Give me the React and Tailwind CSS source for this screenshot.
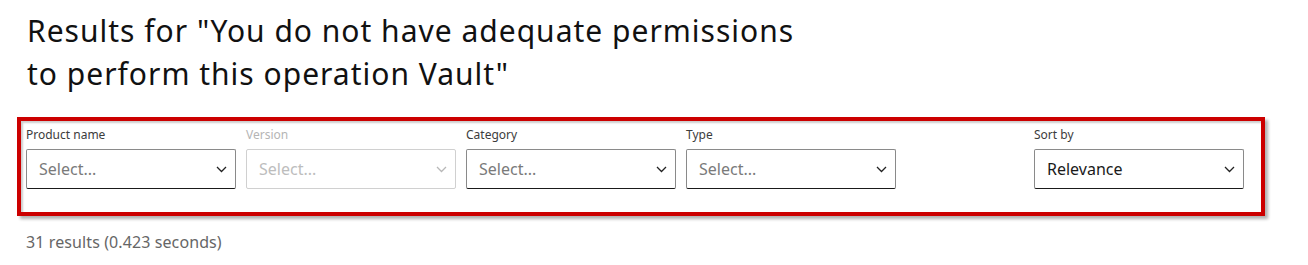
import React from "react";

function Chevron({ disabled }) {
  return (
    <svg width="11" height="7" viewBox="0 0 11 7" className="shrink-0">
      <path
        d="M1 1l4.5 4.5L10 1"
        fill="none"
        stroke={disabled ? "#b8b8b8" : "#222"}
        strokeWidth="1.3"
      />
    </svg>
  );
}

function Field({ label, value, placeholder = true, disabled = false }) {
  return (
    <div className="flex w-[210px] flex-col">
      <div
        className={`h-[16px] text-[12px] leading-[16px] ${
          disabled ? "text-[#b5b5b5]" : "text-[#3c3c3c]"
        }`}
      >
        {label}
      </div>
      <div
        className={`mt-[6px] flex h-[40px] items-center justify-between rounded-[2px] border pl-[12px] pr-[8px] ${
          disabled
            ? "border-[#d0d0d0]"
            : "border-[#8a8a8a] border-b-[#1a1a1a]"
        }`}
      >
        <span
          className={`text-[16px] ${
            disabled
              ? "text-[#bdbdbd]"
              : placeholder
              ? "text-[#7a7a7a]"
              : "text-[#1a1a1a]"
          }`}
        >
          {value}
        </span>
        <Chevron disabled={disabled} />
      </div>
    </div>
  );
}

export default function App() {
  return (
    <div
      className="h-[265px] w-[1308px] bg-white"
      style={{ fontFamily: '"Noto Sans", "Open Sans", sans-serif' }}
    >
      <h1 className="pl-[27px] pt-[9px] text-[30px] font-normal leading-[43px] tracking-[1px] text-[#111]">
        Results for "You do not have adequate permissions
        <br />
        to perform this operation Vault"
      </h1>
      <div className="ml-[17px] mt-[22px] w-[1248px] border-[4px] border-[#cc0000] pb-[23px] pl-[5px] pr-[17px] pt-[6px] shadow-[3px_3px_3px_rgba(0,0,0,0.3),inset_2px_2px_2px_rgba(0,0,0,0.2)]">
        <div className="flex">
          <div className="flex gap-[10px]">
            <Field label="Product name" value="Select..." />
            <Field label="Version" value="Select..." disabled />
            <Field label="Category" value="Select..." />
            <Field label="Type" value="Select..." />
          </div>
          <div className="ml-auto">
            <Field label="Sort by" value="Relevance" placeholder={false} />
          </div>
        </div>
      </div>
      <div className="pl-[26px] pt-[14px] text-[16px] tracking-[0.1px] text-[#666]">
        31 results (0.423 seconds)
      </div>
    </div>
  );
}
